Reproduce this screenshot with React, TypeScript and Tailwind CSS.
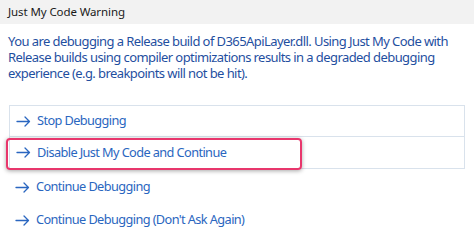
const options = [
  { label: "Stop Debugging", boxed: true },
  { label: "Disable Just My Code and Continue", boxed: true, highlight: true },
  { label: "Continue Debugging" },
  { label: "Continue Debugging (Don't Ask Again)" },
];

function Arrow() {
  return (
    <svg width="15" height="11" viewBox="0 0 15 11" fill="none" stroke="currentColor" strokeWidth="1.3" strokeLinecap="round" strokeLinejoin="round">
      <path d="M1 5.5h12.5M9 1l4.5 4.5L9 10" />
    </svg>
  );
}

export default function App() {
  return (
    <div
      className="w-[474px] h-[243px] bg-white overflow-hidden relative"
      style={{ fontFamily: '"Noto Sans", "Open Sans", sans-serif' }}
    >
      {/* Title bar */}
      <div className="h-[24px] bg-[#f2f2f2] flex items-center px-[8px] text-[11.5px] text-[#1a1a1a] tracking-[-0.1px]">
        Just My Code Warning
      </div>

      {/* Message */}
      <p className="px-[8px] pt-[9px] text-[13px] leading-[16px] text-[#1f4f9f] tracking-[-0.58px] whitespace-nowrap">
        You are debugging a Release build of D365ApiLayer.dll. Using Just My Code with
        <br />
        Release builds using compiler optimizations results in a degraded debugging
        <br />
        experience (e.g. breakpoints will not be hit).
      </p>

      {/* Options */}
      <div className="mt-[24px] ml-[9px] w-[456px] flex flex-col">
        {options.map((o, i) => (
          <div
            key={o.label}
            className={`relative flex items-center pl-[6px] gap-[6px] text-[12.75px] text-[#2a66c0] tracking-[-0.6px] ${
              o.boxed ? "h-[32px] border border-[#d9e2ec]" : "h-[33px] pt-[3px]"
            } ${i === 1 ? "border-t-0" : ""}`}
          >
            <Arrow />
            <span>{o.label}</span>
            {o.highlight && (
              <div className="absolute left-[-4px] top-[1px] w-[296px] h-[32px] rounded-[4px] border-[2.5px] border-[#e8366c] shadow-[0_1px_4px_rgba(0,0,0,0.35)]" />
            )}
          </div>
        ))}
      </div>
    </div>
  );
}
